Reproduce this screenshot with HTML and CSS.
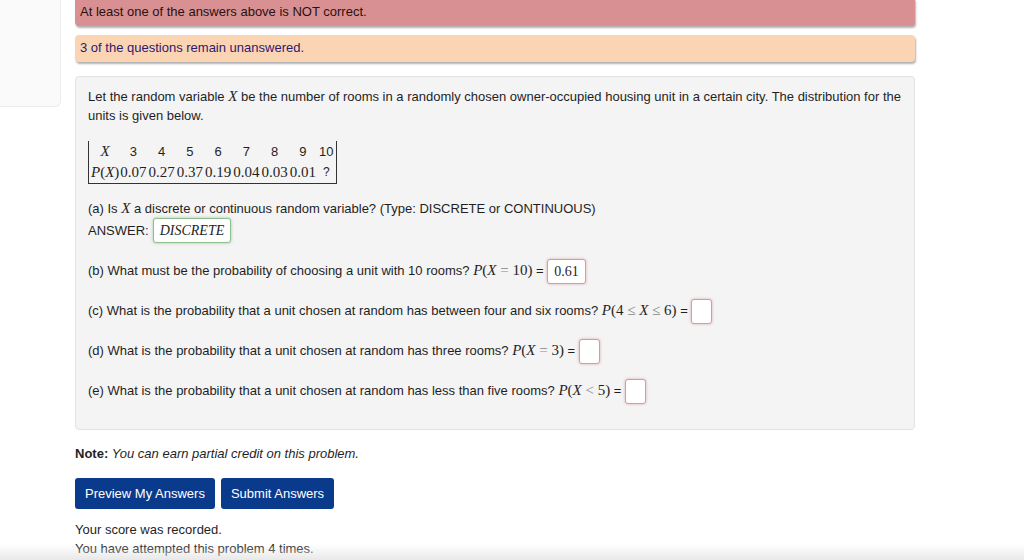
FILE: index.html
```html
<!DOCTYPE html>
<html>
<head>
<meta charset="utf-8">
<link rel="stylesheet" href="styles.css">
</head>
<body>
<div class="page">
  <aside class="side"></aside>
  <main class="main">
    <div class="alert alert-bad">At least one of the answers above is NOT correct.</div>
    <div class="alert alert-warn">3 of the questions remain unanswered.</div>
    <section class="problem">
      <p class="intro">Let the random variable <i class="m">X</i> be the number of rooms in a randomly chosen owner-occupied housing unit in a certain city. The distribution for the units is given below.</p>
      <table class="dist">
        <tr class="hdr"><td class="m lead"><i>X</i></td><td>3</td><td>4</td><td>5</td><td>6</td><td>7</td><td>8</td><td>9</td><td>10</td></tr>
        <tr class="vals"><td class="m lead"><i>P</i>(<i>X</i>)</td><td class="m">0.07</td><td class="m">0.27</td><td class="m">0.37</td><td class="m">0.19</td><td class="m">0.04</td><td class="m">0.03</td><td class="m">0.01</td><td class="q">?</td></tr>
      </table>
      <p class="qa">(a) Is <i class="m">X</i> a discrete or continuous random variable? (Type: DISCRETE or CONTINUOUS)</p>
      <p class="ans">ANSWER: <span class="box box-ok"><i>DISCRETE</i></span></p>
      <p class="q-line">(b) What must be the probability of choosing a unit with 10 rooms? <span class="m"><i>P</i>(<i>X</i> <span class="op">=</span> 10)</span> = <span class="box box-bad">0.61</span></p>
      <p class="q-line">(c) What is the probability that a unit chosen at random has between four and six rooms? <span class="m"><i>P</i>(4 <span class="op">≤</span> <i>X</i> <span class="op">≤</span> 6)</span> = <span class="box box-bad empty"></span></p>
      <p class="q-line">(d) What is the probability that a unit chosen at random has three rooms? <span class="m"><i>P</i>(<i>X</i> <span class="op">=</span> 3)</span> = <span class="box box-bad empty"></span></p>
      <p class="q-line">(e) What is the probability that a unit chosen at random has less than five rooms? <span class="m"><i>P</i>(<i>X</i> <span class="op">&lt;</span> 5)</span> = <span class="box box-bad empty"></span></p>
    </section>
    <p class="note"><b>Note:</b> <i>You can earn partial credit on this problem.</i></p>
    <div class="buttons">
      <button class="btn">Preview My Answers</button>
      <button class="btn">Submit Answers</button>
    </div>
    <p class="status">Your score was recorded.</p>
    <p class="status">You have attempted this problem 4 times.</p>
  </main>
</div>
<div class="fade"></div>
</body>
</html>
```
FILE: styles.css
```css
html, body {
  margin: 0;
  padding: 0;
  background: #fff;
  height: 560px;
  overflow: hidden;
}
body {
  font-family: "Liberation Sans", Arial, sans-serif;
  font-size: 13px;
  color: #1f1f1f;
}
.page {
  display: flex;
  align-items: flex-start;
}
.side {
  width: 60px;
  height: 107px;
  margin-top: -2px;
  background: #fafafa;
  border: 1px solid #ececec;
  border-left: none;
  border-bottom-right-radius: 6px;
  flex: none;
}
.main {
  margin-left: 14px;
  width: 840px;
  margin-top: -3px;
}
.alert {
  border-radius: 4px;
  padding: 5px 5px 6px 5px;
  line-height: 16px;
  box-shadow: 1px 2px 2px rgba(0,0,0,0.3);
}
.alert-bad {
  background: #d89092;
  color: #2a1010;
  padding-top: 7px;
}
.alert-warn {
  background: #fbd4b3;
  color: #2c1a70;
  margin-top: 9px;
}
.problem {
  margin-top: 14px;
  background: #f4f4f4;
  border: 1px solid #e3e3e3;
  border-radius: 4px;
  padding: 10px 12px 25px 12px;
}
.problem p {
  margin: 0;
}
.intro {
  line-height: 19px;
}
.m {
  font-family: "Liberation Serif", "Times New Roman", serif;
  font-size: 15px;
  line-height: 1;
}
i.m, .m i {
  font-style: italic;
}
.op {
  color: #888;
}
.dist {
  border-collapse: collapse;
  margin-top: 16px;
  border-left: 1px solid #333;
  border-right: 1px solid #333;
  border-bottom: 1px solid #333;
}
.dist td {
  padding: 0 1px;
  text-align: center;
  height: 21px;
  line-height: 21px;
}
.dist .hdr td {
  padding: 0 2px;
}
.dist td.lead {
  padding: 0 0 0 2px;
}
.dist td.m {
  font-size: 15px;
}
.dist .q {
  font-size: 12px;
  padding: 0 3px;
}
.qa {
  margin-top: 16px !important;
  line-height: 18px;
}
.ans {
  margin-top: 0 !important;
  line-height: 24px;
  display: flex;
  align-items: center;
  gap: 4px;
}
.box {
  display: inline-flex;
  align-items: center;
  box-sizing: border-box;
  height: 24px;
  background: #fff;
  border-radius: 3px;
  vertical-align: middle;
  font-family: "Liberation Serif", "Times New Roman", serif;
  font-size: 14px;
}
.box-ok {
  border: 1px solid #8fbf8f;
  box-shadow: 0 0 3px rgba(80,150,80,0.5);
  padding: 0 6px 0 6px;
  height: 25px;
}
.box-ok i {
  font-size: 14px;
}
.box-bad {
  border: 1px solid #d99a9a;
  box-shadow: 0 0 3px rgba(200,90,90,0.45);
  padding: 0 6px;
  height: 25px;
}
.box-bad.empty {
  width: 21px;
  padding: 0;
}
.q-line {
  margin-top: 14px !important;
  line-height: 25px;
}
.ans + .q-line {
  margin-top: 15px !important;
}
.note {
  margin: 16px 0 0 0;
  line-height: 16px;
}
.note b {
  font-weight: bold;
}
.buttons {
  display: flex;
  gap: 6px;
  margin-top: 16px;
}
.btn {
  background: #0a3a8c;
  color: #fff;
  border: none;
  border-radius: 3px;
  height: 31px;
  padding: 0 10px;
  font-family: "Liberation Sans", Arial, sans-serif;
  font-size: 13px;
}
.status {
  margin: 0;
  line-height: 19px;
}
.buttons + .status {
  margin-top: 11px;
}
.fade {
  position: fixed;
  left: 0;
  right: 0;
  bottom: 0;
  height: 16px;
  background: linear-gradient(to bottom, rgba(230,230,230,0), rgba(225,225,225,0.75));
  pointer-events: none;
}
```
